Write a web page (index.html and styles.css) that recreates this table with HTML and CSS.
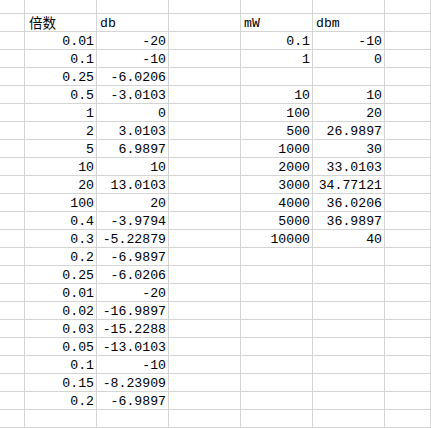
FILE: index.html
```html
<!DOCTYPE html>
<html>
<head>
<meta charset="utf-8">
<link rel="stylesheet" href="styles.css">
</head>
<body>
<div class="sheet">
  <div class="c"></div><div class="c"></div><div class="c"></div><div class="c"></div><div class="c"></div><div class="c"></div><div class="c"></div>

  <div class="c"></div><div class="c t cjk">倍数</div><div class="c t">db</div><div class="c"></div><div class="c t">mW</div><div class="c t">dbm</div><div class="c"></div>
  <div class="c"></div><div class="c n">0.01</div><div class="c n">-20</div><div class="c"></div><div class="c n">0.1</div><div class="c n">-10</div><div class="c"></div>
  <div class="c"></div><div class="c n">0.1</div><div class="c n">-10</div><div class="c"></div><div class="c n">1</div><div class="c n">0</div><div class="c"></div>
  <div class="c"></div><div class="c n">0.25</div><div class="c n">-6.0206</div><div class="c"></div><div class="c"></div><div class="c"></div><div class="c"></div>
  <div class="c"></div><div class="c n">0.5</div><div class="c n">-3.0103</div><div class="c"></div><div class="c n">10</div><div class="c n">10</div><div class="c"></div>
  <div class="c"></div><div class="c n">1</div><div class="c n">0</div><div class="c"></div><div class="c n">100</div><div class="c n">20</div><div class="c"></div>
  <div class="c"></div><div class="c n">2</div><div class="c n">3.0103</div><div class="c"></div><div class="c n">500</div><div class="c n">26.9897</div><div class="c"></div>
  <div class="c"></div><div class="c n">5</div><div class="c n">6.9897</div><div class="c"></div><div class="c n">1000</div><div class="c n">30</div><div class="c"></div>
  <div class="c"></div><div class="c n">10</div><div class="c n">10</div><div class="c"></div><div class="c n">2000</div><div class="c n">33.0103</div><div class="c"></div>
  <div class="c"></div><div class="c n">20</div><div class="c n">13.0103</div><div class="c"></div><div class="c n">3000</div><div class="c n">34.77121</div><div class="c"></div>
  <div class="c"></div><div class="c n">100</div><div class="c n">20</div><div class="c"></div><div class="c n">4000</div><div class="c n">36.0206</div><div class="c"></div>
  <div class="c"></div><div class="c n">0.4</div><div class="c n">-3.9794</div><div class="c"></div><div class="c n">5000</div><div class="c n">36.9897</div><div class="c"></div>
  <div class="c"></div><div class="c n">0.3</div><div class="c n">-5.22879</div><div class="c"></div><div class="c n">10000</div><div class="c n">40</div><div class="c"></div>
  <div class="c"></div><div class="c n">0.2</div><div class="c n">-6.9897</div><div class="c"></div><div class="c"></div><div class="c"></div><div class="c"></div>
  <div class="c"></div><div class="c n">0.25</div><div class="c n">-6.0206</div><div class="c"></div><div class="c"></div><div class="c"></div><div class="c"></div>
  <div class="c"></div><div class="c n">0.01</div><div class="c n">-20</div><div class="c"></div><div class="c"></div><div class="c"></div><div class="c"></div>
  <div class="c"></div><div class="c n">0.02</div><div class="c n">-16.9897</div><div class="c"></div><div class="c"></div><div class="c"></div><div class="c"></div>
  <div class="c"></div><div class="c n">0.03</div><div class="c n">-15.2288</div><div class="c"></div><div class="c"></div><div class="c"></div><div class="c"></div>
  <div class="c"></div><div class="c n">0.05</div><div class="c n">-13.0103</div><div class="c"></div><div class="c"></div><div class="c"></div><div class="c"></div>
  <div class="c"></div><div class="c n">0.1</div><div class="c n">-10</div><div class="c"></div><div class="c"></div><div class="c"></div><div class="c"></div>
  <div class="c"></div><div class="c n">0.15</div><div class="c n">-8.23909</div><div class="c"></div><div class="c"></div><div class="c"></div><div class="c"></div>
  <div class="c"></div><div class="c n">0.2</div><div class="c n">-6.9897</div><div class="c"></div><div class="c"></div><div class="c"></div><div class="c"></div>
  <div class="c"></div><div class="c"></div><div class="c"></div><div class="c"></div><div class="c"></div><div class="c"></div><div class="c"></div>
</div>
</body>
</html>
```
FILE: styles.css
```css
html, body {
  margin: 0;
  padding: 0;
  background: #ffffff;
}
body {
  width: 431px;
  height: 428px;
  overflow: hidden;
}
.sheet {
  display: grid;
  grid-template-columns: 25px repeat(5, 72px) 1fr;
  grid-template-rows: 14px;
  grid-auto-rows: 18px;
  font-family: "Liberation Mono", "Noto Sans CJK SC", monospace;
  font-size: 13.2px;
  color: #000;
}
.c {
  box-sizing: border-box;
  border-right: 1px solid #d4d4d4;
  border-bottom: 1px solid #d4d4d4;
  line-height: 15px;
  padding-top: 2px;
  white-space: nowrap;
}
.n {
  text-align: right;
  padding-right: 2px;
}
.t {
  padding-left: 3px;
}
.cjk {
  font-family: "Noto Sans CJK SC", sans-serif;
  font-size: 13.5px;
  padding-left: 4px;
  padding-top: 0;
  line-height: 16px;
}
```
